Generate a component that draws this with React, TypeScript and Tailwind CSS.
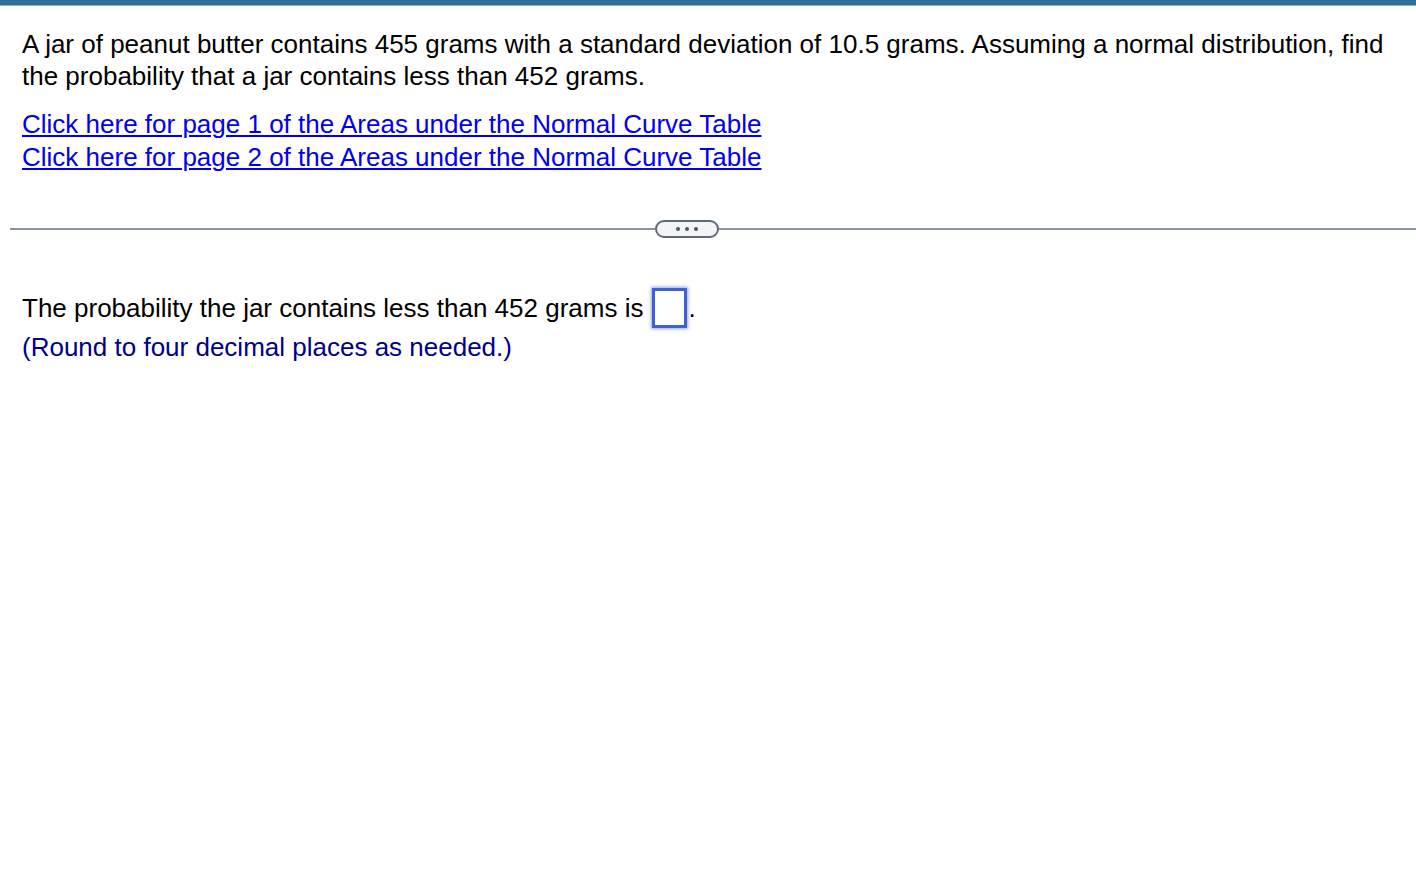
export default function App() {
  return (
    <div className="min-h-screen bg-white font-['Liberation_Sans',Arial,sans-serif] text-black">
      <div className="h-[5px] bg-[#2f7196]" />
      <div className="h-px bg-[#9fb3c3]" />

      <div className="px-[22px] pt-[22px] text-[26px] leading-[32px]">
        <p>
          A jar of peanut butter contains 455 grams with a standard deviation of 10.5 grams. Assuming a normal distribution, find
          the probability that a jar contains less than 452 grams.
        </p>
        <div className="mt-[16px] flex flex-col leading-[33px]">
          <a href="#" className="w-fit text-[#0000ee] underline">
            Click here for page 1 of the Areas under the Normal Curve Table
          </a>
          <a href="#" className="w-fit text-[#0000ee] underline">
            Click here for page 2 of the Areas under the Normal Curve Table
          </a>
        </div>
      </div>

      {/* divider with more button */}
      <div className="mt-[46px] ml-[10px] flex items-center">
        <div className="h-[2px] w-[645px] bg-[#8a93a0]" />
        <button className="flex h-[18px] w-[64px] items-center justify-center gap-[5px] rounded-full border-2 border-[#5f6b7a] bg-[#f3f4f6]">
          <span className="h-[4px] w-[4px] rounded-full bg-[#4b5563]" />
          <span className="h-[4px] w-[4px] rounded-full bg-[#4b5563]" />
          <span className="h-[4px] w-[4px] rounded-full bg-[#4b5563]" />
        </button>
        <div className="h-[2px] flex-1 bg-[#8a93a0]" />
      </div>

      <div className="px-[22px] pt-[50px] text-[26px]">
        <div className="flex items-center">
          <span>The probability the jar contains less than 452 grams is</span>
          <span className="ml-[9px] inline-block h-[40px] w-[35px] border-[3px] border-[#3d62cf] shadow-[0_0_3px_1px_rgba(59,95,207,0.55)]" />
          <span className="ml-[1px]">.</span>
        </div>
        <p className="mt-[1px] leading-[36px] text-[#00008b]">(Round to four decimal places as needed.)</p>
      </div>
    </div>
  );
}
